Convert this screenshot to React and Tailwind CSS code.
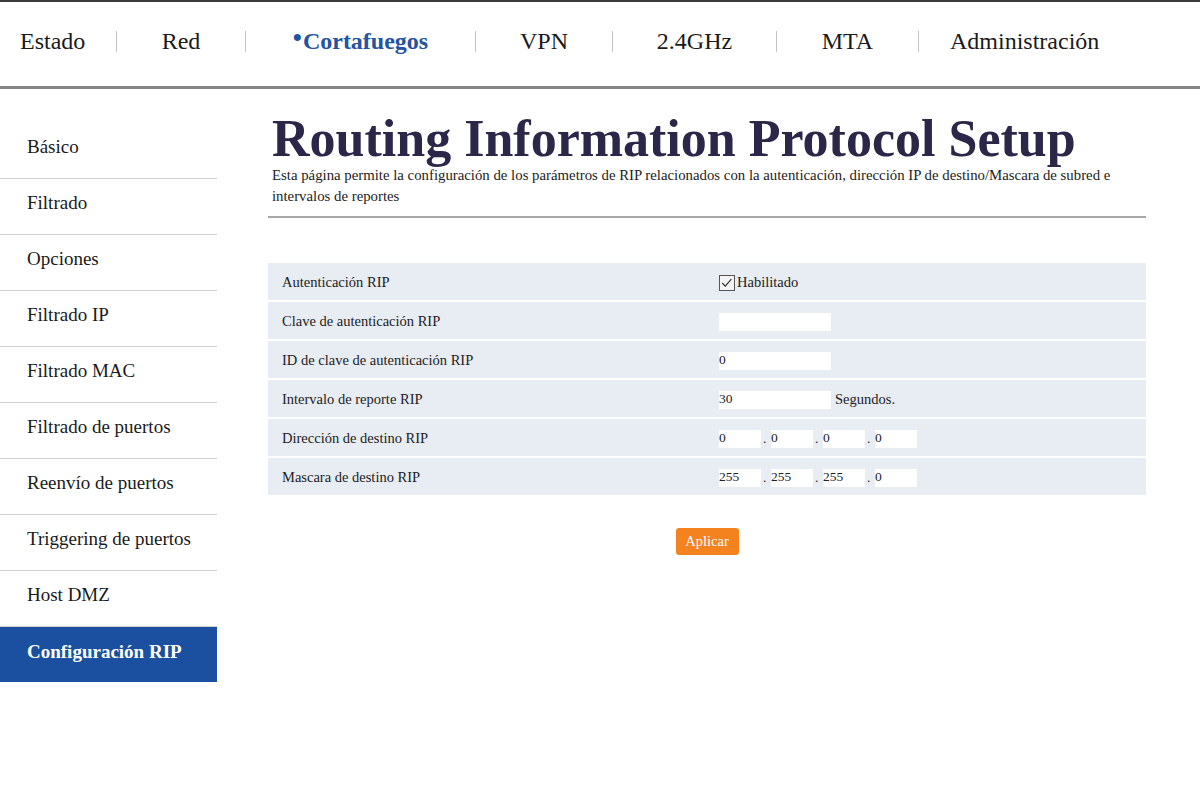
import React from "react";

const navItems = [
  { label: "Estado", w: "w-[96px] text-left" },
  { label: "Red", w: "w-[128px] text-center" },
  { label: "Cortafuegos", w: "w-[229px] text-center", active: true },
  { label: "VPN", w: "w-[136px] text-center" },
  { label: "2.4GHz", w: "w-[163px] text-center" },
  { label: "MTA", w: "w-[141px] text-center" },
  { label: "Administración", w: "pl-[31px] text-left" },
];

const sideItems = [
  "Básico",
  "Filtrado",
  "Opciones",
  "Filtrado IP",
  "Filtrado MAC",
  "Filtrado de puertos",
  "Reenvío de puertos",
  "Triggering de puertos",
  "Host DMZ",
];

function TextInput({ value, w = "w-[112px]" }) {
  return (
    <input
      type="text"
      defaultValue={value}
      className={`${w} h-[18px] bg-white border-0 outline-none px-0 text-[13.5px] text-[#222] font-['Liberation_Serif',serif]`}
    />
  );
}

function IpInputs({ values }) {
  return (
    <div className="flex items-center">
      {values.map((v, i) => (
        <React.Fragment key={i}>
          {i > 0 && (
            <span className="w-[10px] text-[13.5px] text-[#222] pl-[2px] leading-none">.</span>
          )}
          <TextInput value={v} w="w-[42px]" />
        </React.Fragment>
      ))}
    </div>
  );
}

function Row({ label, children }) {
  return (
    <div className="flex items-center h-[37px] bg-[#e8ecf3]">
      <div className="w-[451px] pl-[14px] text-[14.5px] text-[#222] pt-[2px]">{label}</div>
      <div className="flex items-center pt-[2px]">{children}</div>
    </div>
  );
}

export default function App() {
  return (
    <div className="w-[1200px] h-[786px] bg-white font-['Liberation_Serif',serif] text-[#222] overflow-hidden">
      {/* Header */}
      <header className="h-[89px] border-t-2 border-[#3a3a3a] border-b-[3px] border-b-[#858585] flex items-center pl-[20px] pb-[6px]">
        {navItems.map((item, i) => (
          <React.Fragment key={item.label}>
            {i > 0 && <div className="w-px h-[21px] bg-[#c4c4c4] shrink-0" />}
            <div
              className={`${item.w} shrink-0 text-[24px] leading-none ${
                item.active ? "text-[#2553a0] font-bold" : "text-[#1a1a1a]"
              }`}
            >
              {item.active && <span className="text-[26px] relative -top-[3px] mr-[1px]">•</span>}
              {item.label}
            </div>
          </React.Fragment>
        ))}
      </header>

      <div className="flex">
        {/* Sidebar */}
        <aside className="w-[217px] shrink-0 pt-[34px]">
          {sideItems.map((s) => (
            <div
              key={s}
              className="h-[56px] border-b border-[#d0d0d0] pl-[27px] pt-[14px] text-[19px] leading-[20px] text-[#1a1a1a]"
            >
              {s}
            </div>
          ))}
          <div className="h-[55px] bg-[#1b4f9f] pl-[27px] pt-[15px] text-[19px] leading-[20px] font-bold text-white">
            Configuración RIP
          </div>
        </aside>

        {/* Main */}
        <main className="ml-[51px] w-[878px] pt-[24px]">
          <h1 className="pl-[4px] text-[52px] leading-none font-bold text-[#2b2748]">
            Routing Information Protocol Setup
          </h1>
          <p className="pl-[4px] pr-[2px] text-[14.8px] leading-[21px] text-[#222]">
            Esta página permite la configuración de los parámetros de RIP relacionados con la autenticación, dirección IP de destino/Mascara de subred e intervalos de reportes
          </p>
          <div className="mt-[9px] h-[2px] bg-[#a8a8a8]" />

          <div className="mt-[45px] flex flex-col gap-[2px]">
            <Row label="Autenticación RIP">
              <span className="w-[16px] h-[16px] border border-[#555] bg-[#f4f4f4] flex items-center justify-center">
                <svg viewBox="0 0 16 16" className="w-[14px] h-[14px]">
                  <path d="M2.5 8.2 L6 11.5 L13 3.5" fill="none" stroke="#333" strokeWidth="1.4" />
                </svg>
              </span>
              <span className="ml-[2px] text-[14.5px]">Habilitado</span>
            </Row>
            <Row label="Clave de autenticación RIP">
              <TextInput value="" />
            </Row>
            <Row label="ID de clave de autenticación RIP">
              <TextInput value="0" />
            </Row>
            <Row label="Intervalo de reporte RIP">
              <TextInput value="30" />
              <span className="ml-[4px] text-[14.5px]">Segundos.</span>
            </Row>
            <Row label="Dirección de destino RIP">
              <IpInputs values={["0", "0", "0", "0"]} />
            </Row>
            <Row label="Mascara de destino RIP">
              <IpInputs values={["255", "255", "255", "0"]} />
            </Row>
          </div>

          <div className="mt-[33px] flex justify-center">
            <button className="w-[63px] h-[27px] rounded-[3px] bg-[#f4821f] text-white text-[14.5px] font-['Liberation_Serif',serif]">
              Aplicar
            </button>
          </div>
        </main>
      </div>
    </div>
  );
}
